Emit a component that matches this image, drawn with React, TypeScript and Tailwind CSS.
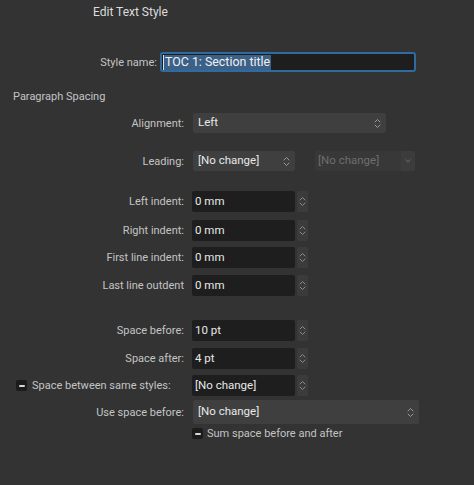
import React from 'react';

function Chevrons({ className = '' }: { className?: string }) {
  return (
    <svg width="7" height="11" viewBox="0 0 7 11" className={className} fill="none" stroke="currentColor" strokeWidth="1" strokeLinecap="round" strokeLinejoin="round">
      <path d="M1 4 L3.5 1.5 L6 4" />
      <path d="M1 7 L3.5 9.5 L6 7" />
    </svg>
  );
}

function Stepper() {
  return (
    <div className="ml-[2px] flex h-full w-[11px] flex-col items-center justify-center rounded-[2px] bg-[#3b3b3b] text-[#8a8a8a]">
      <Chevrons />
    </div>
  );
}

function Label({ children }: { children: React.ReactNode }) {
  return <div className="w-[184px] shrink-0 text-right text-[#c4c4c4]">{children}</div>;
}

function NumberRow({ label, value, mt }: { label: string; value: string; mt: string }) {
  return (
    <div className={`flex h-[21px] items-center ${mt}`}>
      <Label>{label}</Label>
      <div className="ml-[8px] flex h-full items-stretch">
        <div className="flex w-[103px] items-center rounded-[2px] bg-[#1e1e1e] pl-[3px] text-[11.5px] text-[#e8e8e8]">{value}</div>
        <Stepper />
      </div>
    </div>
  );
}

function Check() {
  return (
    <div className="flex h-[11px] w-[11px] items-center justify-center rounded-[2px] bg-[#1c1c1c]">
      <div className="h-[2px] w-[6px] rounded bg-[#d8d8d8]" />
    </div>
  );
}

export default function App() {
  return (
    <div className="h-[485px] w-[474px] overflow-hidden bg-[#333333] text-[11px] leading-none" style={{ fontFamily: 'Roboto, "Liberation Sans", sans-serif' }}>
      <div className="flex h-[13px] items-center pl-[93px] mt-[5px] text-[12px] text-[#dcdcdc]">Edit Text Style</div>

      <div className="mt-[34px] flex h-[20px] items-center">
        <div className="w-[157px] text-right text-[#c4c4c4]">Style name:</div>
        <div className="ml-[3px] flex h-full w-[256px] items-center rounded-[3px] border-[2px] border-[#2f6aa0] bg-[#1e1e1e] pl-[1px]">
          <span className="flex h-[15px] items-center border-l border-[#e0e0e0] bg-[#3c6189] pl-[1px] pr-[1px] text-[12.4px] text-[#f0f0f0]">TOC 1: Section title</span>
        </div>
      </div>

      <div className="mt-[18px] flex h-[13px] items-center pl-[13px] text-[#c4c4c4]">Paragraph Spacing</div>

      <div className="mt-[10px] flex h-[20px] items-center">
        <Label>Alignment:</Label>
        <div className="ml-[9px] flex h-full w-[193px] items-center justify-between rounded-[2px] bg-[#3f3f3f] pl-[5px] pr-[5px] text-[11.5px] text-[#e8e8e8]">
          <span>Left</span>
          <Chevrons className="text-[#9a9a9a]" />
        </div>
      </div>

      <div className="mt-[18px] flex h-[20px] items-center">
        <Label>Leading:</Label>
        <div className="ml-[9px] flex h-full w-[102px] items-center justify-between rounded-[2px] bg-[#3f3f3f] pl-[5px] pr-[5px] text-[11.5px] text-[#e8e8e8]">
          <span>[No change]</span>
          <Chevrons className="text-[#9a9a9a]" />
        </div>
        <div className="ml-[20px] flex h-full w-[100px] items-center justify-between rounded-[2px] bg-[#383838] pl-[3px] text-[11.5px] text-[#6e6e6e]">
          <span>[No change]</span>
          <div className="flex h-full w-[14px] items-center justify-center rounded-r-[2px] bg-[#3c3c3c]">
            <svg width="6" height="4" viewBox="0 0 6 4" fill="none" stroke="#6e6e6e" strokeWidth="1">
              <path d="M0.5 0.5 L3 3 L5.5 0.5" />
            </svg>
          </div>
        </div>
      </div>

      <NumberRow label="Left indent:" value="0 mm" mt="mt-[20px]" />
      <NumberRow label="Right indent:" value="0 mm" mt="mt-[8px]" />
      <NumberRow label="First line indent:" value="0 mm" mt="mt-[6px]" />
      <NumberRow label="Last line outdent" value="0 mm" mt="mt-[7px]" />

      <NumberRow label="Space before:" value="10 pt" mt="mt-[24px]" />
      <NumberRow label="Space after:" value="4 pt" mt="mt-[7px]" />

      <div className="mt-[6px] flex h-[21px] items-center">
        <div className="flex w-[184px] items-center pl-[16px]">
          <Check />
          <span className="ml-[5px] text-[#c4c4c4]">Space between same styles:</span>
        </div>
        <div className="ml-[8px] flex h-full items-stretch">
          <div className="flex w-[103px] items-center rounded-[2px] bg-[#1e1e1e] pl-[3px] text-[11.5px] text-[#e8e8e8]">[No change]</div>
          <Stepper />
        </div>
      </div>

      <div className="mt-[4px] flex h-[24px] items-center">
        <Label>Use space before:</Label>
        <div className="ml-[9px] flex h-full w-[226px] items-center justify-between rounded-[2px] bg-[#3f3f3f] pl-[5px] pr-[5px] text-[11.5px] text-[#e8e8e8]">
          <span>[No change]</span>
          <Chevrons className="text-[#9a9a9a]" />
        </div>
      </div>

      <div className="mt-[4px] flex h-[11px] items-center pl-[192px]">
        <Check />
        <span className="ml-[4px] text-[#c4c4c4]">Sum space before and after</span>
      </div>
    </div>
  );
}
